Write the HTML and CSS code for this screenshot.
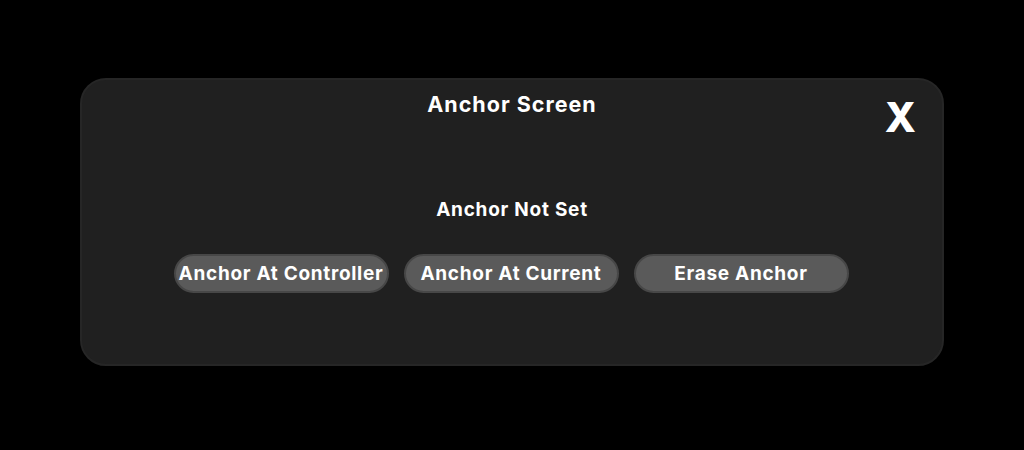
FILE: index.html
```html
<!DOCTYPE html>
<html>
<head>
<meta charset="utf-8">
<link rel="stylesheet" href="styles.css">
</head>
<body>
<div class="panel">
  <h1 class="title">Anchor Screen</h1>
  <button class="close" type="button">X</button>
  <p class="status">Anchor Not Set</p>
  <div class="actions">
    <button class="btn" type="button">Anchor At Controller</button>
    <button class="btn" type="button">Anchor At Current</button>
    <button class="btn" type="button">Erase Anchor</button>
  </div>
</div>
</body>
</html>
```
FILE: styles.css
```css
html, body {
  margin: 0;
  padding: 0;
  background: #000;
  width: 1024px;
  height: 450px;
  overflow: hidden;
}
body {
  font-family: Inter, "Liberation Sans", Arial, sans-serif;
  color: #fff;
}
.panel {
  position: relative;
  box-sizing: border-box;
  margin: 78px 0 0 80px;
  width: 864px;
  height: 288px;
  background: #202020;
  border: 2px solid #262626;
  border-radius: 26px;
  display: flex;
  flex-direction: column;
  align-items: center;
  padding-top: 12px;
}
.title {
  margin: 0;
  font-size: 21.5px;
  line-height: 25px;
  font-weight: 700;
  letter-spacing: 1px;
}
.close {
  position: absolute;
  top: 17px;
  right: 26px;
  margin: 0;
  padding: 0;
  background: none;
  border: 0;
  color: #fff;
  font-family: Inter, "Liberation Sans", Arial, sans-serif;
  font-weight: 800;
  font-size: 41px;
  line-height: 41px;
}
.status {
  margin: 81px 0 0;
  font-size: 19px;
  line-height: 24px;
  font-weight: 700;
  letter-spacing: 0.75px;
}
.actions {
  margin-top: 32px;
  display: flex;
  gap: 15px;
  margin-left: -2px;
}
.btn {
  box-sizing: border-box;
  width: 215px;
  height: 39px;
  padding: 0;
  background: #5a5a5a;
  border: 2px solid #474747;
  border-radius: 20px;
  color: #fff;
  font-family: Inter, "Liberation Sans", Arial, sans-serif;
  font-weight: 700;
  font-size: 19px;
  letter-spacing: 0.7px;
  display: flex;
  align-items: center;
  justify-content: center;
}
```
